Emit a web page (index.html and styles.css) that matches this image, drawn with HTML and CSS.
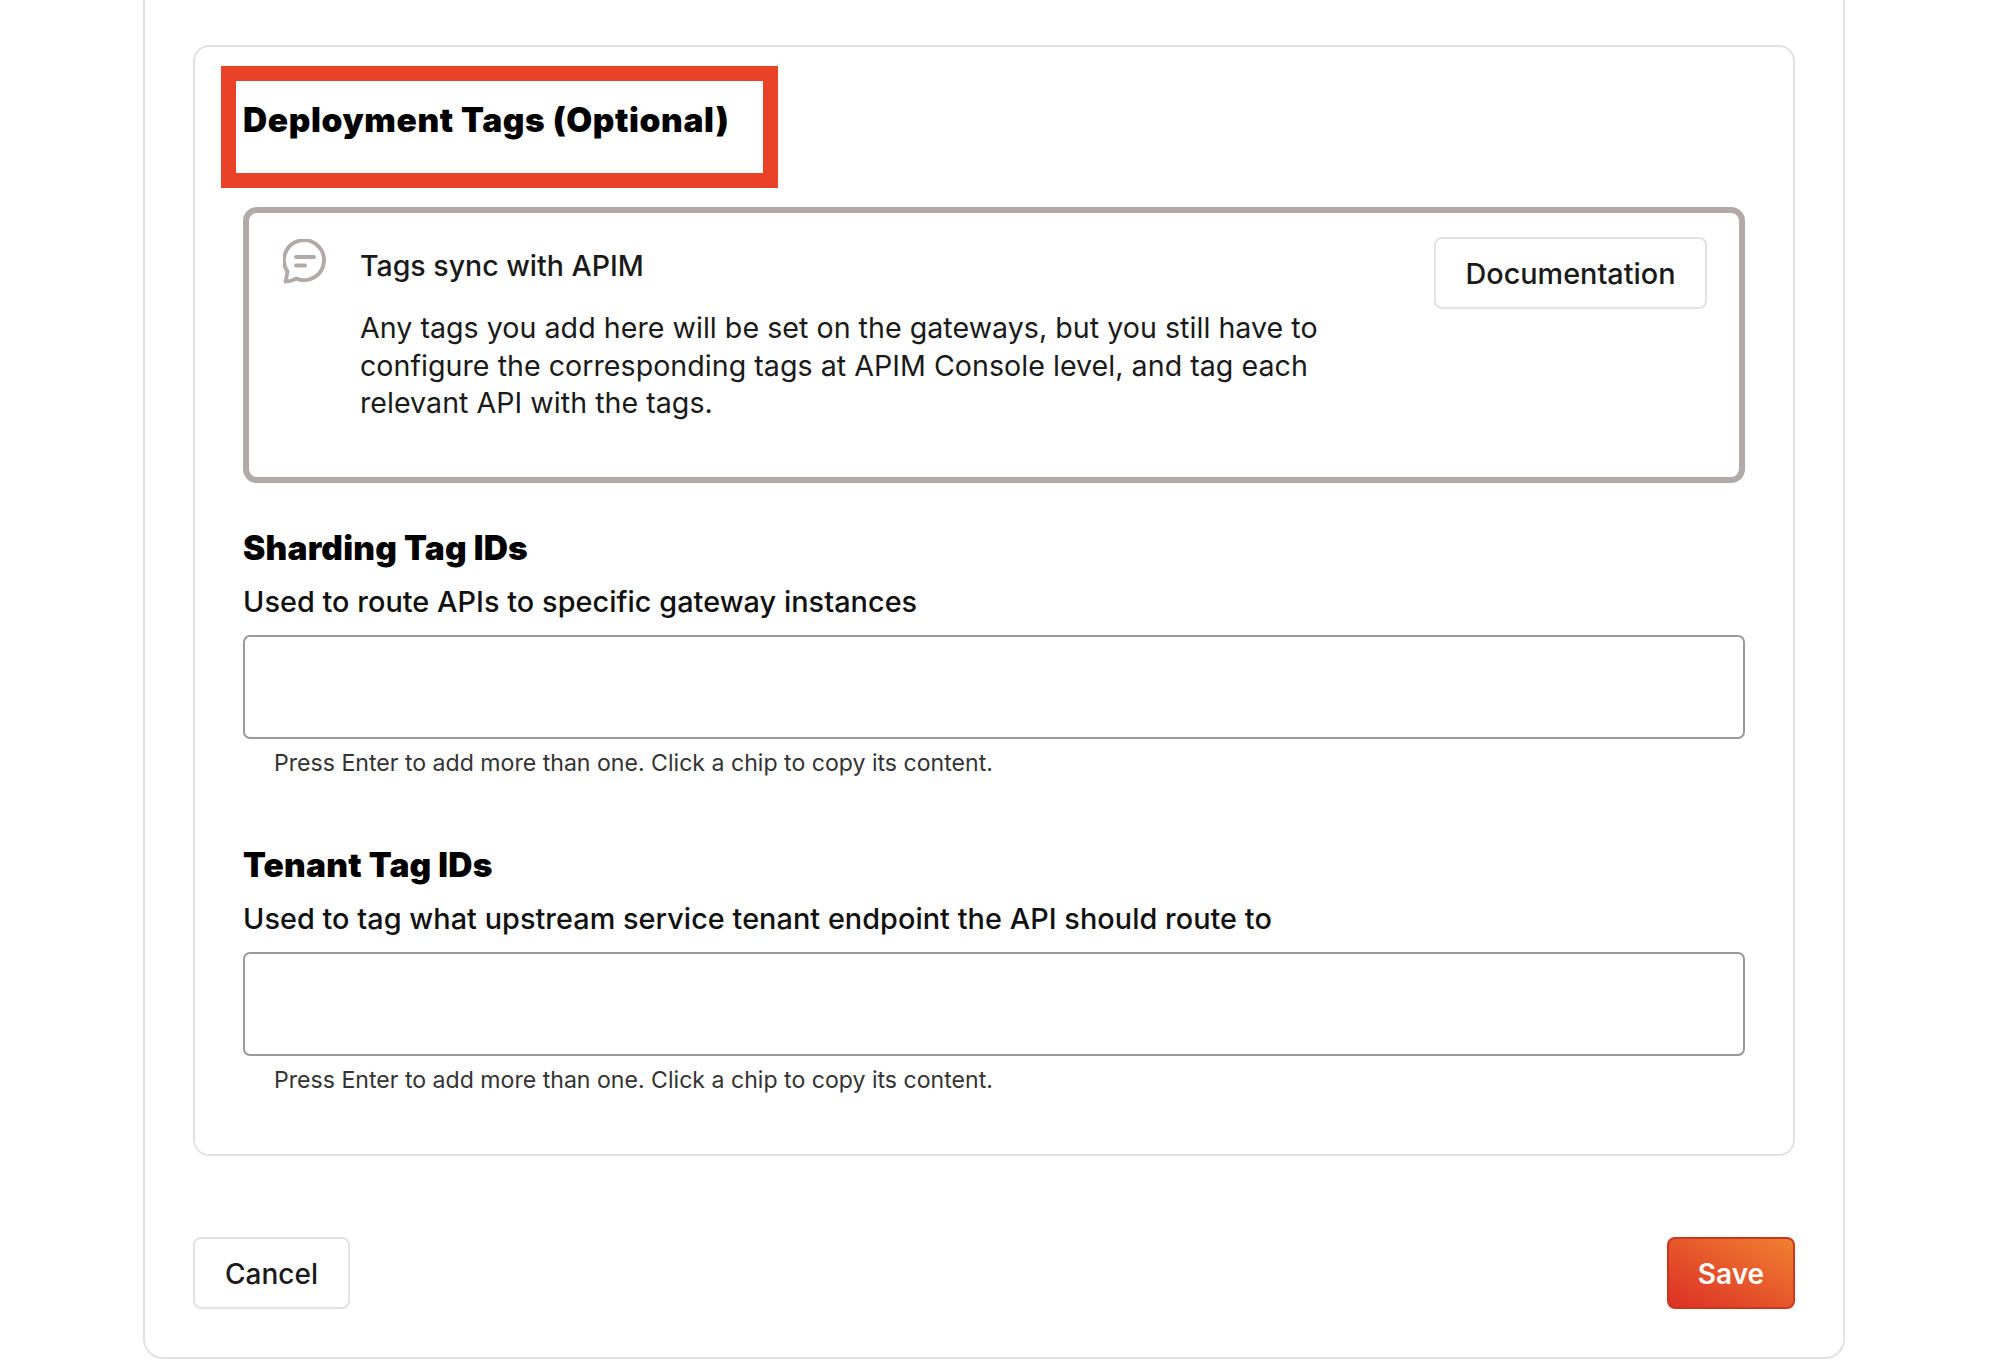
FILE: index.html
```html
<!DOCTYPE html>
<html lang="en">
<head>
    <meta charset="UTF-8">
    <title>Deployment Tags</title>
    <link rel="stylesheet" href="styles.css">
</head>
<body>
    <div class="page-card">
        <div class="tags-card">
            <h2 class="card-title">
                Deployment Tags (Optional)
                <span class="annotation"></span>
            </h2>
            <div class="notice">
                <svg class="notice-icon" viewBox="0 0 44 45" fill="none" stroke="#b2aaa8" stroke-width="3.9" stroke-linecap="round" stroke-linejoin="round">
                    <path d="M4.5 32.5A20 20 0 1 1 13 39.500C10 41.500 6 42.500 2.500 42.500C3.500 39 4 36 4.500 32.500Z"/>
                    <path d="M13 18H31"/>
                    <path d="M13 26.500H22"/>
                </svg>
                <div class="notice-body">
                    <div class="notice-title">Tags sync with APIM</div>
                    <p class="notice-text">Any tags you add here will be set on the gateways, but you still have to configure the corresponding tags at APIM Console level, and tag each relevant API with the tags.</p>
                </div>
                <button class="btn doc-btn">Documentation</button>
            </div>
            <div class="field">
                <h3 class="field-title">Sharding Tag IDs</h3>
                <div class="field-desc">Used to route APIs to specific gateway instances</div>
                <div class="chip-input"></div>
                <div class="field-hint">Press Enter to add more than one. Click a chip to copy its content.</div>
            </div>
            <div class="field">
                <h3 class="field-title">Tenant Tag IDs</h3>
                <div class="field-desc">Used to tag what upstream service tenant endpoint the API should route to</div>
                <div class="chip-input"></div>
                <div class="field-hint">Press Enter to add more than one. Click a chip to copy its content.</div>
            </div>
        </div>
        <div class="actions">
            <button class="btn cancel-btn">Cancel</button>
            <button class="btn save-btn">Save</button>
        </div>
    </div>
</body>
</html>
```

FILE: styles.css
```css
body { margin: 0; background: #fff; font-family: Inter, "Liberation Sans", sans-serif; color: #1a1a1a; }

.page-card {
    box-sizing: border-box;
    width: 1702px;
    margin-left: 143px;
    padding: 45px 48px 48px;
    border: 2px solid #e2e2e2;
    border-top: none;
    border-radius: 0 0 20px 20px;
}

.tags-card {
    box-sizing: border-box;
    height: 1111px;
    padding: 49px 48px 0;
    border: 2px solid #e2e2e2;
    border-radius: 16px;
}

.card-title {
    position: relative;
    margin: 0 0 63px;
    font-size: 33.5px;
    line-height: 48px;
    font-weight: 900;
    letter-spacing: 0.6px;
    color: #000;
}
.annotation {
    position: absolute;
    left: -22px;
    top: -30px;
    width: 557px;
    height: 122px;
    box-sizing: border-box;
    border: 15px solid #ea4228;
}

.notice {
    display: flex;
    box-sizing: border-box;
    height: 276px;
    padding: 24px 32px 0 34px;
    border: 6px solid #b2aaa8;
    border-radius: 14px;
}
.notice-icon { width: 44px; height: 45px; margin-top: 2px; flex-shrink: 0; }
.notice-body { flex: 1; padding-left: 33px; padding-top: 10px; }
.notice-title { font-size: 28.5px; line-height: 38px; font-weight: 500; }
.notice-text { width: 1000px; margin: 24px 0 0; font-size: 28.6px; line-height: 37.5px; letter-spacing: 0.03px; }

.btn {
    box-sizing: border-box;
    height: 72px;
    padding-top: 2px;
    border-radius: 8px;
    border: 2px solid #e2e2e2;
    background: #fff;
    color: #1a1a1a;
    font-family: inherit;
    font-size: 28px;
    font-weight: 500;
}
.doc-btn { width: 273px; flex-shrink: 0; font-size: 28.8px; }

.field { margin-top: 43px; height: 274px; }
.field-title { margin: 0 0 13px; font-size: 33.5px; line-height: 44px; font-weight: 900; letter-spacing: 0.2px; color: #000; }
.field-desc { font-size: 28.8px; line-height: 38px; font-weight: 500; letter-spacing: 0.06px; color: #111; }
.chip-input {
    box-sizing: border-box;
    height: 104px;
    margin-top: 14px;
    border: 2px solid #999;
    border-radius: 7px;
}
.field-hint { margin-top: 9px; padding-left: 31px; font-size: 23.1px; line-height: 30px; color: #333; }

.actions { display: flex; justify-content: space-between; margin-top: 81px; }
.cancel-btn { width: 157px; }
.save-btn {
    width: 128px;
    border-color: #c8381f;
    background: linear-gradient(to top right, #dc2f25, #f08030);
    color: #fff;
    font-weight: 600;
}
```
